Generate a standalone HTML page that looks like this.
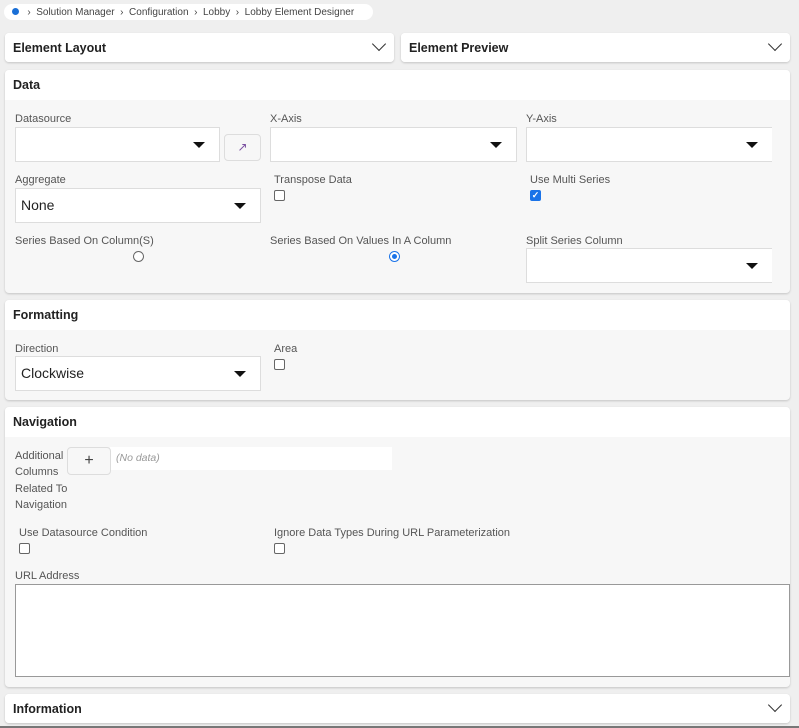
<!DOCTYPE html>
<html><head><meta charset="utf-8"><style>
*{box-sizing:border-box;margin:0;padding:0}
body{width:799px;height:728px;background:#efefef;font-family:"Liberation Sans",sans-serif;color:#333;position:relative;overflow:hidden;font-size:11px}
.a{position:absolute}
.card{position:absolute;background:#f7f7f7;border-radius:4px;box-shadow:0 1px 2px rgba(0,0,0,.18);overflow:hidden}
.hd{background:#fff;height:30px;padding:0 8px;line-height:31px;font-weight:bold;font-size:12.5px;color:#222}
.lbl{position:absolute;font-size:11px;color:#555;margin-top:2px}
.sel{position:absolute;background:#fff;border:1px solid #ddd;font-size:14px;color:#222;padding-left:5px}
.sel:after{content:"";position:absolute;right:14px;top:50%;margin-top:-3px;border-left:6px solid transparent;border-right:6px solid transparent;border-top:6px solid #111}
.cb{position:absolute;width:11px;height:11px;border:1px solid #666;border-radius:2px;background:#fff}
.chev{position:absolute;right:10px;top:9px;width:10px;height:10px;border-right:1.3px solid #333;border-bottom:1.3px solid #333;transform:rotate(45deg)}
</style></head><body>
<div class="a" style="left:4px;top:4px;width:369px;height:16px;background:#fff;border-radius:8px;font-size:10px;color:#444;line-height:17px;padding-left:8px">
<span style="display:inline-block;width:7px;height:7px;border-radius:50%;background:#1a6fd6;vertical-align:middle;margin-top:-2px"></span>
&nbsp;&nbsp;›&nbsp; Solution Manager &nbsp;›&nbsp; Configuration &nbsp;›&nbsp; Lobby &nbsp;›&nbsp; Lobby Element Designer</div>

<div class="card" style="left:5px;top:33px;width:389px;height:29px;background:#fff"><div class="hd" style="height:29px;line-height:30px">Element Layout</div><div class="chev" style="top:6px"></div></div>
<div class="card" style="left:401px;top:33px;width:389px;height:29px;background:#fff"><div class="hd" style="height:29px;line-height:30px">Element Preview</div><div class="chev" style="top:6px"></div></div>

<div class="card" style="left:5px;top:70px;width:785px;height:223px"><div class="hd">Data</div></div>
<div class="lbl" style="left:15px;top:111px">Datasource</div>
<div class="sel" style="left:15px;top:127px;width:205px;height:35px"></div>
<div class="a" style="left:224px;top:134px;width:37px;height:27px;border:1px solid #ddd;border-radius:4px;background:#f7f7f7;color:#7a4fa0;text-align:center;line-height:25px;font-size:12px">↗</div>
<div class="lbl" style="left:270px;top:111px">X-Axis</div>
<div class="sel" style="left:270px;top:127px;width:247px;height:35px"></div>
<div class="lbl" style="left:526px;top:111px">Y-Axis</div>
<div class="sel" style="left:526px;top:127px;width:246px;height:35px;border-right:none"></div>
<div class="lbl" style="left:15px;top:172px">Aggregate</div>
<div class="sel" style="left:15px;top:188px;width:246px;height:35px;line-height:33px">None</div>
<div class="lbl" style="left:274px;top:172px">Transpose Data</div>
<div class="cb" style="left:274px;top:190px"></div>
<div class="lbl" style="left:530px;top:172px">Use Multi Series</div>
<div class="cb" style="left:530px;top:190px;background:#1a73e8;border-color:#1a73e8;color:#fff;font-size:9px;line-height:9px;text-align:center;font-weight:bold">✓</div>
<div class="lbl" style="left:15px;top:233px">Series Based On Column(S)</div>
<div class="a" style="left:133px;top:251px;width:11px;height:11px;border:1px solid #666;border-radius:50%;background:#fff"></div>
<div class="lbl" style="left:270px;top:233px">Series Based On Values In A Column</div>
<div class="a" style="left:389px;top:251px;width:11px;height:11px;border:1px solid #1a73e8;border-radius:50%;background:#fff"><div style="margin:2px;width:5px;height:5px;border-radius:50%;background:#1a73e8"></div></div>
<div class="lbl" style="left:526px;top:233px">Split Series Column</div>
<div class="sel" style="left:526px;top:248px;width:246px;height:35px;border-right:none"></div>

<div class="card" style="left:5px;top:300px;width:785px;height:100px"><div class="hd">Formatting</div></div>
<div class="lbl" style="left:15px;top:341px">Direction</div>
<div class="sel" style="left:15px;top:356px;width:246px;height:35px;line-height:33px">Clockwise</div>
<div class="lbl" style="left:274px;top:341px">Area</div>
<div class="cb" style="left:274px;top:359px"></div>

<div class="card" style="left:5px;top:407px;width:785px;height:280px"><div class="hd">Navigation</div></div>
<div class="lbl" style="left:15px;top:446px;line-height:16.3px">Additional<br>Columns<br>Related To<br>Navigation</div>
<div class="a" style="left:110px;top:447px;width:282px;height:23px;background:#fff;font-style:italic;color:#999;font-size:10.5px;line-height:23px;padding-left:6px">(No data)</div>
<div class="a" style="left:67px;top:447px;width:44px;height:28px;border:1px solid #ddd;border-radius:4px;background:#f7f7f7;text-align:center;line-height:26px;font-size:16px;color:#444">+</div>
<div class="lbl" style="left:19px;top:525px">Use Datasource Condition</div>
<div class="cb" style="left:19px;top:543px"></div>
<div class="lbl" style="left:274px;top:525px">Ignore Data Types During URL Parameterization</div>
<div class="cb" style="left:274px;top:543px"></div>
<div class="lbl" style="left:15px;top:568px">URL Address</div>
<div class="a" style="left:15px;top:584px;width:775px;height:93px;background:#fff;border:1px solid #999"></div>

<div class="card" style="left:5px;top:694px;width:785px;height:29px;background:#fff"><div class="hd" style="height:29px;line-height:30px">Information</div><div class="chev" style="top:6px"></div></div>
<div class="a" style="left:0;top:726px;width:799px;height:2px;background:#777"></div>
</body></html>
